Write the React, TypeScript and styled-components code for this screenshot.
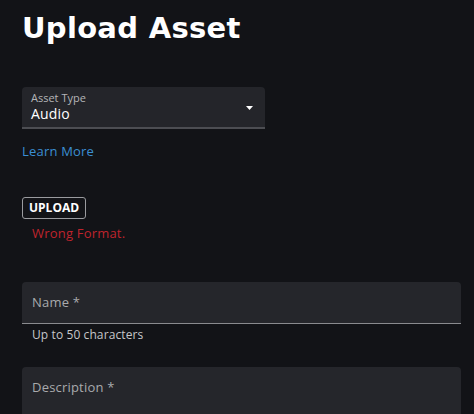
import React from "react";
import styled, { createGlobalStyle } from "styled-components";

const Global = createGlobalStyle`
  html, body { margin: 0; padding: 0; background: #121317; }
  body { font-family: "Open Sans", sans-serif; color: #fff; overflow: hidden; }
`;

const Page = styled.div`
  display: flex;
  flex-direction: column;
  padding: 11px 13px 0 22px;
  & > * { flex-shrink: 0; }
`;

const Title = styled.h1`
  margin: 0;
  font-family: "DejaVu Sans", sans-serif;
  font-weight: 700;
  font-size: 29px;
  line-height: 34px;
  letter-spacing: 0.3px;
  color: #fff;
`;

const Select = styled.div`
  margin-top: 42px;
  width: 243px;
  height: 42px;
  box-sizing: border-box;
  background: #24252a;
  border-radius: 4px 4px 0 0;
  border-bottom: 2px solid #4c4d52;
  padding: 3px 9px 0;
  position: relative;
`;

const SmallLabel = styled.div`
  font-size: 11px;
  line-height: 15px;
  color: #b4b5b8;
`;

const Value = styled.div`
  font-size: 14px;
  line-height: 18px;
  letter-spacing: 0.2px;
  color: #fff;
`;

const Caret = styled.svg`
  position: absolute;
  right: 12px;
  top: 19px;
`;

const Link = styled.a`
  margin-top: 13px;
  font-size: 13px;
  line-height: 18px;
  letter-spacing: 0.2px;
  color: #3b8fd3;
  text-decoration: none;
  align-self: flex-start;
`;

const UploadButton = styled.button`
  margin-top: 37px;
  align-self: flex-start;
  height: 22px;
  padding: 0 6px;
  background: transparent;
  border: 1px solid #9a9b9f;
  border-radius: 3px;
  color: #fff;
  font-family: "Open Sans", sans-serif;
  font-weight: 700;
  font-size: 12px;
  line-height: 20px;
`;

const ErrorText = styled.div`
  margin-top: 5px;
  padding-left: 10px;
  font-size: 13px;
  line-height: 18px;
  letter-spacing: 0.2px;
  color: #bf242d;
`;

const Field = styled.div<{ $tall?: boolean; $mt: number }>`
  margin-top: ${(p) => p.$mt}px;
  height: ${(p) => (p.$tall ? 80 : 42)}px;
  box-sizing: border-box;
  background: #25262b;
  border-radius: 4px 4px 0 0;
  border-bottom: ${(p) => (p.$tall ? "none" : "1px solid #8a8b8f")};
  padding: 11px 10px 0;
  font-size: 13px;
  line-height: 18px;
  letter-spacing: 0.2px;
  color: #a9aaad;
`;

const Hint = styled.div`
  margin-top: 3px;
  padding-left: 10px;
  font-size: 12px;
  line-height: 16px;
  letter-spacing: 0.1px;
  color: #c6c7ca;
`;

export default function App() {
  return (
    <>
      <Global />
      <Page>
        <Title>Upload Asset</Title>
        <Select>
          <SmallLabel>Asset Type</SmallLabel>
          <Value>Audio</Value>
          <Caret width="7" height="4" viewBox="0 0 7 4">
            <path d="M0 0 L7 0 L3.5 4 Z" fill="#fff" />
          </Caret>
        </Select>
        <Link href="#">Learn More</Link>
        <UploadButton>UPLOAD</UploadButton>
        <ErrorText>Wrong Format.</ErrorText>
        <Field $mt={40}>Name *</Field>
        <Hint>Up to 50 characters</Hint>
        <Field $tall $mt={24}>Description *</Field>
      </Page>
    </>
  );
}
